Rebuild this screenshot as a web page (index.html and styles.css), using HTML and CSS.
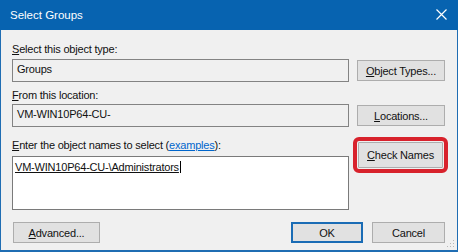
FILE: index.html
```html
<!DOCTYPE html>
<html lang="en">
<head>
    <meta charset="UTF-8">
    <title>Select Groups</title>
    <link rel="stylesheet" href="styles.css">
</head>
<body>
    <div class="window">
        <div class="titlebar">
            <span class="title">Select Groups</span>
            <span class="close">
                <svg width="11" height="11" viewBox="0 0 11 11">
                    <path d="M0.5 0.5 L10.5 10.5 M10.5 0.5 L0.5 10.5" stroke="#fff" stroke-width="1.2" fill="none"/>
                </svg>
            </span>
        </div>

        <div class="content">
            <div class="label label-first"><u>S</u>elect this object type:</div>
            <div class="row">
                <div class="field">Groups</div>
                <button class="btn"><u>O</u>bject Types...</button>
            </div>

            <div class="label label-second"><u>F</u>rom this location:</div>
            <div class="row">
                <div class="field">VM-WIN10P64-CU-</div>
                <button class="btn"><u>L</u>ocations...</button>
            </div>

            <div class="names">
                <div class="names-left">
                    <div class="label label-third"><u>E</u>nter the object names to select (<a href="#" class="link">examples</a>):</div>
                    <div class="textarea"><span class="entry">VM-WIN10P64-CU-\Administrators</span></div>
                </div>
                <div class="names-right">
                    <button class="btn check"><u>C</u>heck Names</button>
                </div>
            </div>

            <div class="footer">
                <button class="btn advanced"><u>A</u>dvanced...</button>
                <div class="spacer"></div>
                <button class="btn ok">OK</button>
                <button class="btn cancel">Cancel</button>
            </div>
        </div>

        <svg class="grip" width="8" height="8" viewBox="0 0 8 8">
            <rect x="6" y="0" width="1" height="1" fill="#b8b8b8"/>
            <rect x="3" y="3" width="1" height="1" fill="#b8b8b8"/>
            <rect x="6" y="3" width="1" height="1" fill="#b8b8b8"/>
            <rect x="0" y="6" width="1" height="1" fill="#b8b8b8"/>
            <rect x="3" y="6" width="1" height="1" fill="#b8b8b8"/>
            <rect x="6" y="6" width="1" height="1" fill="#b8b8b8"/>
        </svg>
    </div>
</body>
</html>
```

FILE: styles.css
```css
body {
    margin: 0;
    font-family: "Liberation Sans", Arial, sans-serif;
    font-size: 11px;
    letter-spacing: -0.2px;
    color: #111;
    background: #f0f0f0;
}

.window {
    position: relative;
    width: 458px;
    height: 252px;
    box-sizing: border-box;
    background: #f0f0f0;
    border: 1px solid #1f6db3;
    border-top: none;
    border-bottom-width: 2px;
}

.titlebar {
    height: 30px;
    margin: 0 -1px;
    background: #0763b0;
    display: flex;
    align-items: center;
    justify-content: space-between;
    padding: 0 11px 0 10px;
}

.title {
    color: #fff;
    font-size: 11.5px;
    letter-spacing: 0;
}

.close {
    display: flex;
    margin-top: -2px;
}

.content {
    padding: 12px 12px 0 11px;
}

.label {
    line-height: 15px;
    height: 15px;
    white-space: nowrap;
}

.label-first {
    margin-bottom: 2px;
}

.label-second {
    margin-top: 6px;
    margin-bottom: 1px;
}

.label-third {
    margin-top: 11px;
    margin-bottom: 3px;
}

.link {
    color: #0066cc;
}

.row,
.names {
    display: grid;
    grid-template-columns: 1fr 88px;
    column-gap: 8px;
    align-items: center;
}

.names {
    align-items: start;
}

.field {
    height: 23px;
    box-sizing: border-box;
    border: 1px solid #838383;
    background: #f0f0f0;
    padding: 0 4px;
    line-height: 18px;
}

.btn {
    height: 21px;
    box-sizing: border-box;
    border: 1px solid #adadad;
    background: #e1e1e1;
    font-family: inherit;
    font-size: 11px;
    letter-spacing: -0.2px;
    color: #111;
    padding: 0;
    cursor: default;
}

.textarea {
    height: 54px;
    box-sizing: border-box;
    border: 1px solid #7a7a7a;
    background: #fff;
    padding: 3px 2px;
    line-height: 14px;
}

.entry {
    text-decoration: underline;
    border-right: 1px solid #000;
    padding-right: 1px;
}

.names-right {
    padding-top: 15px;
}

.check {
    width: 85px;
    height: 26px;
    margin-left: 1px;
    outline: 4px solid #d8222c;
    outline-offset: 1px;
    border-radius: 1px;
}

.footer {
    display: flex;
    margin-top: 12px;
    gap: 9px;
}

.spacer {
    flex: 1;
}

.advanced {
    width: 87px;
    margin-left: 1px;
}

.ok {
    width: 72px;
    border: 2px solid #1a6cb5;
}

.cancel {
    width: 73px;
}

.grip {
    position: absolute;
    right: 2px;
    bottom: 2px;
}
```
